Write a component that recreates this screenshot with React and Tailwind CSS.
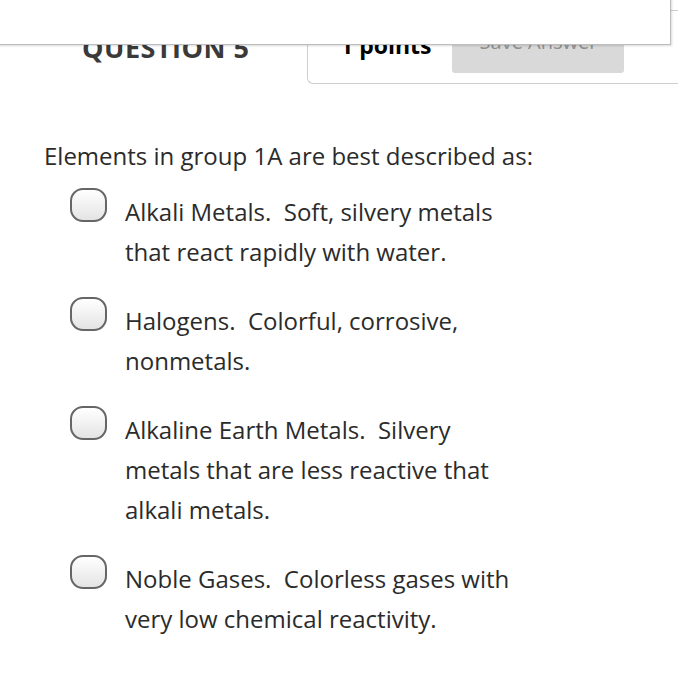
import React from "react";

const options = [
  ["Alkali Metals.  Soft, silvery metals", "that react rapidly with water."],
  ["Halogens.  Colorful, corrosive,", "nonmetals."],
  ["Alkaline Earth Metals.  Silvery", "metals that are less reactive that", "alkali metals."],
  ["Noble Gases.  Colorless gases with", "very low chemical reactivity."],
];

const App = () => {
  return (
    <div
      className="relative w-[678px] h-[700px] overflow-hidden bg-white text-[#2b2b2b]"
      style={{ fontFamily: '"Open Sans", sans-serif' }}
    >
      {/* overlay popup covering the header */}
      <div className="absolute -left-1 top-[-4px] w-[675px] h-[49px] bg-white border border-[#bdbdbd] shadow-[1px_1px_2px_rgba(0,0,0,0.15)] z-10" />

      {/* header */}
      <div className="flex items-start h-[84px]">
        <div className="w-[307px] pl-[82px] pt-[33px] text-[27px] font-bold leading-[30px] text-[#3a3a3a] tracking-[0.5px]">
          QUESTION 5
        </div>
        <div className="flex-1 -mr-4 mt-[10px] h-[74px] border-l border-b border-t border-[#cfcfcf] rounded-bl-md flex items-start pl-[32px]">
          <span className="mt-[19px] text-[23px] font-bold leading-[30px] text-black">1 points</span>
          <button
            type="button"
            className="ml-[21px] mt-[8px] w-[172px] h-[54px] bg-[#d9d9d9] rounded-[3px] text-[20px] text-[#8f8f8f] pt-[8px] leading-[30px] self-start flex justify-center items-start"
          >
            Save Answer
          </button>
        </div>
      </div>

      {/* question */}
      <div className="pl-[44px] pt-[52px]">
        <p className="text-[24px] leading-[40px]">Elements in group 1A are best described as:</p>

        <div className="mt-[16px] pl-[26px] flex flex-col gap-[29px]">
          {options.map((lines, i) => (
            <label key={i} className="flex items-start">
              <span className="mt-[-4px] w-[37px] h-[34px] rounded-[13px] border-2 border-[#666] bg-gradient-to-b from-white to-[#e4e4e4] shrink-0" />
              <span className="ml-[18px] text-[24px] leading-[40px] whitespace-pre">
                {lines.map((l, j) => (
                  <span key={j} className="block">
                    {l}
                  </span>
                ))}
              </span>
            </label>
          ))}
        </div>
      </div>
    </div>
  );
};

export default App;
